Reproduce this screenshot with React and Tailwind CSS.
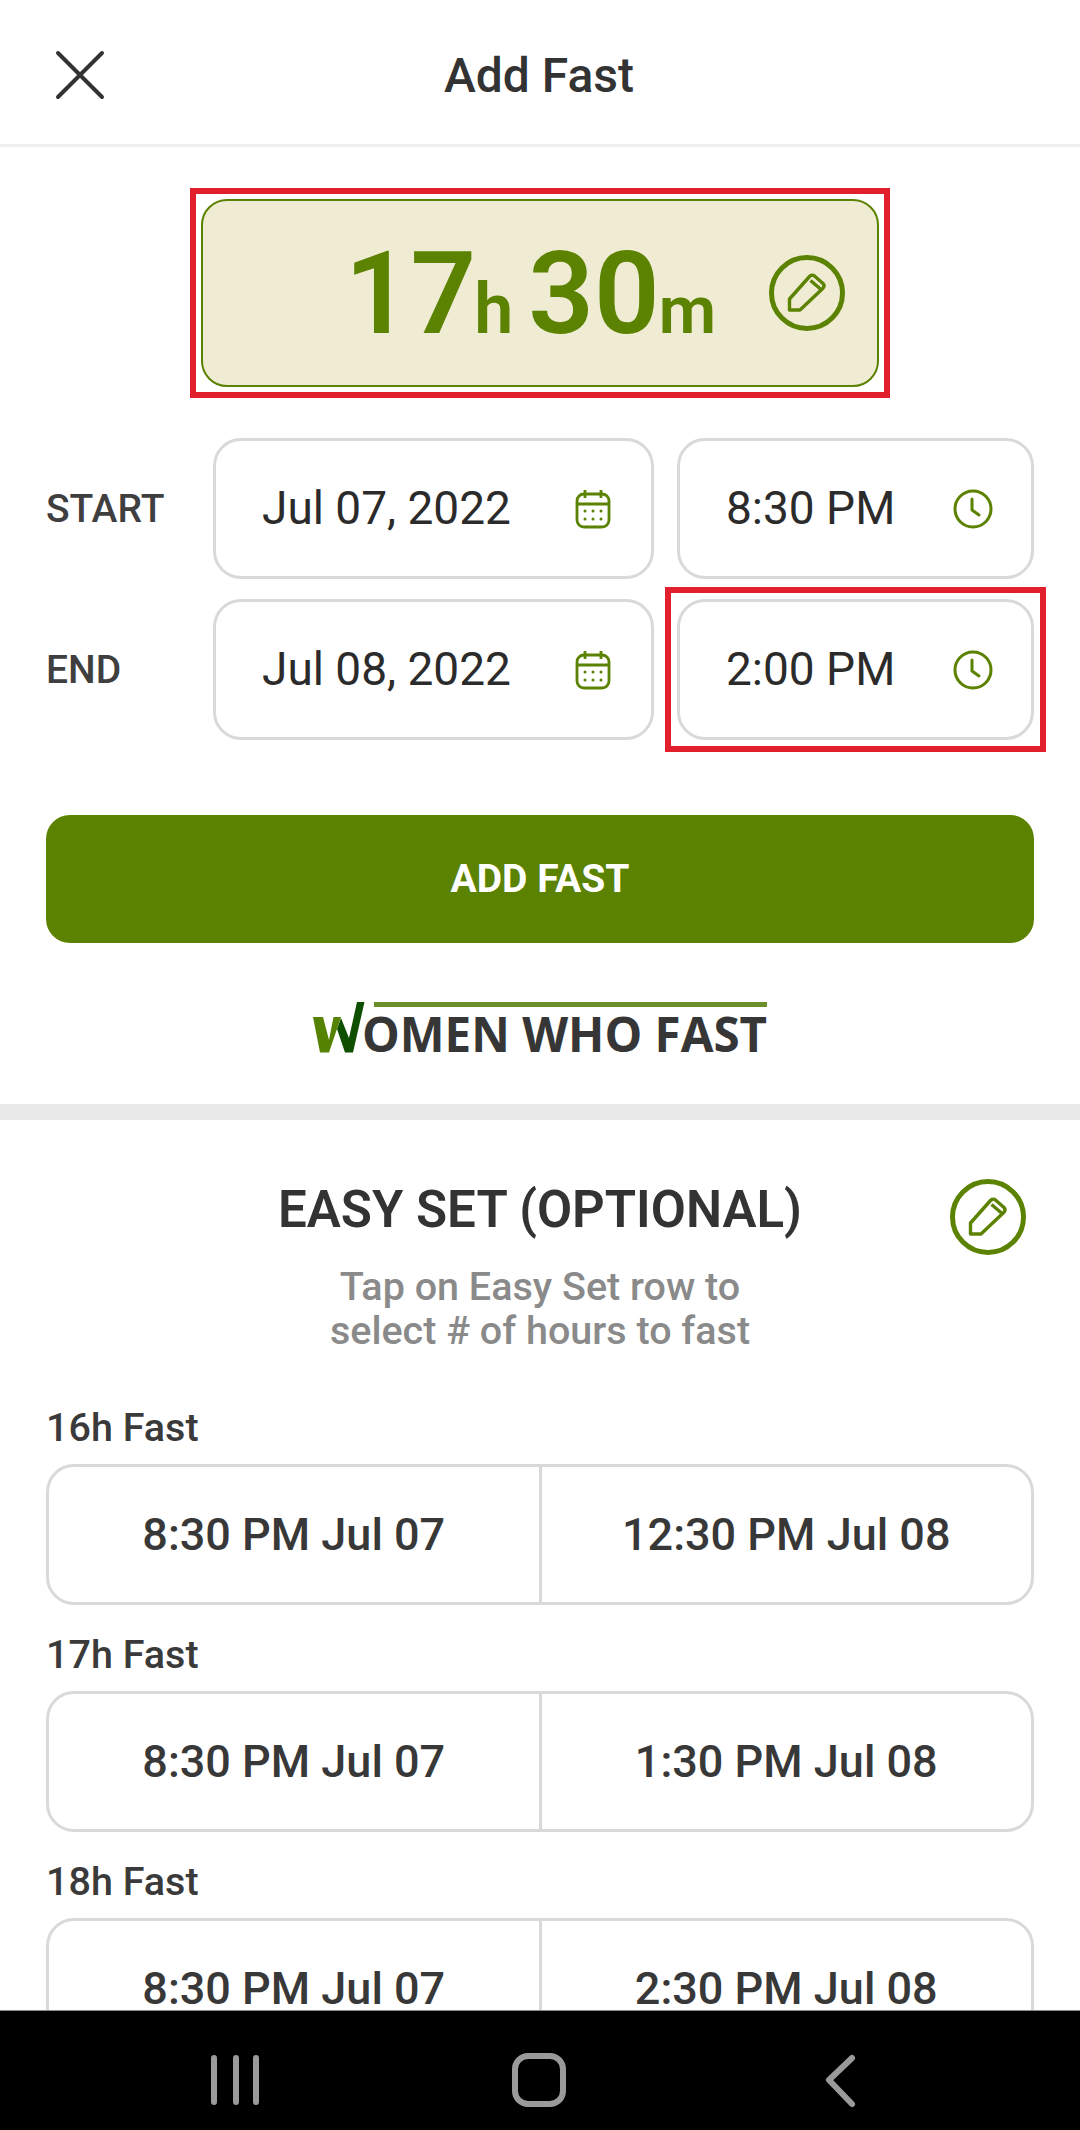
const GREEN = "#5b8200";

function PencilCircle() {
  return (
    <svg width="76" height="76" viewBox="0 0 76 76" fill="none" stroke={GREEN} className="shrink-0">
      <circle cx="38" cy="38" r="35.5" strokeWidth="5" />
      <path
        d="M20.500 55V44L40.500 21.500a3.500 3.500 0 0 1 5-.5l8.500 7.500a3.500 3.500 0 0 1 0 4.700L31 55Z"
        strokeWidth="3.400"
        strokeLinejoin="round"
      />
      <path d="M41.500 25.500l10 8.500" strokeWidth="3.400" />
    </svg>
  );
}

function CalendarIcon() {
  return (
    <svg width="36" height="40" viewBox="0 0 36 40" fill="none" stroke={GREEN} strokeWidth="2.8" className="shrink-0">
      <rect x="2" y="5" width="32" height="33" rx="7" />
      <path d="M2 15h32M10 1v8M26 1v8" />
      <g fill={GREEN} stroke="none">
        <circle cx="10" cy="22" r="1.500" />
        <circle cx="18" cy="22" r="1.500" />
        <circle cx="26" cy="22" r="1.500" />
        <circle cx="10" cy="30" r="1.500" />
        <circle cx="18" cy="30" r="1.500" />
        <circle cx="26" cy="30" r="1.500" />
      </g>
    </svg>
  );
}

function ClockIcon() {
  return (
    <svg width="40" height="40" viewBox="0 0 40 40" fill="none" stroke={GREEN} strokeWidth="3" className="shrink-0">
      <circle cx="20" cy="20" r="18" />
      <path d="M19 10v11l7 5" strokeLinecap="round" strokeLinejoin="round" />
    </svg>
  );
}

function DateField({ value }) {
  return (
    <div className="w-[441px] h-[141px] rounded-[28px] border-[3px] border-[#d9d9d9] flex items-center pl-[46px] pr-[40px] justify-between">
      <span className="text-[46px] text-[#2b2b2b]">{value}</span>
      <CalendarIcon />
    </div>
  );
}

function TimeField({ value }) {
  return (
    <div className="w-[357px] h-[141px] rounded-[28px] border-[3px] border-[#d9d9d9] flex items-center pl-[46px] pr-[38px] justify-between">
      <span className="text-[46px] text-[#2b2b2b]">{value}</span>
      <ClockIcon />
    </div>
  );
}

function EasySetRow({ label, start, end }) {
  return (
    <div>
      <div className="text-[39.500px] font-medium text-[#3a3a3a] leading-[42px] mb-[15px]">{label}</div>
      <div className="h-[141px] rounded-[28px] border-[3px] border-[#d9d9d9] flex items-center text-[45px] font-medium text-[#383838]">
        <div className="flex-1 h-full flex items-center justify-center border-r-[3px] border-[#d9d9d9]">{start}</div>
        <div className="flex-1 h-full flex items-center justify-center">{end}</div>
      </div>
    </div>
  );
}

export default function App() {
  return (
    <div className="w-[1080px] h-[2130px] flex flex-col bg-white overflow-hidden font-[Roboto,sans-serif]">
      <div className="flex-1 min-h-0 overflow-hidden">
        {/* Header */}
        <header className="h-[147px] border-b-[3px] border-[#eeeeee] flex items-center justify-center relative">
          <svg width="50" height="50" viewBox="0 0 50 50" fill="none" stroke="#333333" strokeWidth="4" strokeLinecap="round" className="absolute left-[55px] top-[50px]">
            <path d="M3 3l44 44M47 3L3 47" />
          </svg>
          <h1 className="text-[48px] font-medium text-[#333333] mt-[8px] pr-[2px]">Add Fast</h1>
        </header>

        {/* Duration */}
        <div className="flex justify-center mt-[41px]">
          <div className="w-[700px] h-[210px] border-[6px] border-[#e21f2d] p-[5px]">
            <div className="h-full rounded-[26px] border-2 border-[#5b8200] bg-[#f0ecd4] flex items-center justify-end pr-[32px]">
              <div className="flex items-baseline font-semibold text-[#5b8200] mr-[53px]">
                <span className="text-[115px] leading-none">17</span>
                <span className="text-[70px] leading-none ml-[-2px] mr-[15px]">h</span>
                <span className="text-[115px] leading-none">30</span>
                <span className="text-[66px] leading-none ml-[-1px]">m</span>
              </div>
              <PencilCircle />
            </div>
          </div>
        </div>

        {/* Start / end fields */}
        <div className="px-[46px] mt-[40px] flex flex-col gap-[20px]">
          <div className="flex items-center">
            <div className="w-[167px] text-[39px] font-medium text-[#3f3f3f] pt-[2px]">START</div>
            <DateField value="Jul 07, 2022" />
            <div className="ml-[23px]">
              <TimeField value="8:30 PM" />
            </div>
          </div>
          <div className="flex items-center">
            <div className="w-[167px] text-[39px] font-medium text-[#3f3f3f] pt-[2px]">END</div>
            <DateField value="Jul 08, 2022" />
            <div className="ml-[11px] border-[6px] border-[#e21f2d] p-[6px] -my-[12px] -mr-[12px]">
              <TimeField value="2:00 PM" />
            </div>
          </div>
        </div>

        <div className="px-[46px] mt-[75px]">
          <button className="w-full h-[128px] rounded-[24px] bg-[#5b8200] text-white text-[39px] font-bold">ADD FAST</button>
        </div>

        {/* Logo */}
        <div className="mt-[59px] h-[51px] flex justify-center">
          <div className="flex items-start w-[454px] mr-[2px]">
            <svg width="53" height="51" viewBox="0 0 53 51" className="shrink-0">
              <path d="M1 15H11L17 38L21.500 15H29L17 50.500H8Z" fill="#558200" />
              <path d="M25 27L29 16L37 36L45 0H52.500L41 50.500H33Z" fill="#0f4f00" />
            </svg>
            <div className="ml-[-3px] flex-1 flex flex-col">
              <div className="h-[5px] bg-[#6c8f2b] ml-[12px]" />
              <div className="font-['Open_Sans',sans-serif] font-bold text-[47.500px] leading-[35px] mt-[9px] text-[#363636] whitespace-nowrap">
                OMEN WHO FAST
              </div>
            </div>
          </div>
        </div>

        <div className="mt-[51px] h-[16px] bg-[#e9e9e9]" />

        {/* Easy set */}
        <div className="px-[46px] pt-[62px] relative">
          <div className="absolute right-[54px] top-[59px]">
            <PencilCircle />
          </div>
          <h2 className="text-center text-[51px] font-semibold leading-[56px] text-[#333333]">EASY SET (OPTIONAL)</h2>
          <p className="mt-[27px] text-center text-[39.500px] font-medium leading-[44px] text-[#8a8a8a]">
            Tap on Easy Set row to
            <br />
            select # of hours to fast
          </p>
          <div className="mt-[54px] flex flex-col gap-[29px]">
            <EasySetRow label="16h Fast" start="8:30 PM Jul 07" end="12:30 PM Jul 08" />
            <EasySetRow label="17h Fast" start="8:30 PM Jul 07" end="1:30 PM Jul 08" />
            <EasySetRow label="18h Fast" start="8:30 PM Jul 07" end="2:30 PM Jul 08" />
          </div>
        </div>
      </div>

      {/* Android nav bar */}
      <nav className="h-[120px] shrink-0 bg-black border-t border-[#8a8a8a]">
        <svg width="1080" height="119" viewBox="0 0 1080 119" fill="none" stroke="#9a9a9a" strokeWidth="6" strokeLinecap="round">
          <path d="M214 47v44M236 47v44M256 47v44" />
          <rect x="515" y="45" width="48" height="48" rx="13" />
          <path d="M852 47l-23 22 23 24" strokeLinejoin="round" />
        </svg>
      </nav>
    </div>
  );
}
